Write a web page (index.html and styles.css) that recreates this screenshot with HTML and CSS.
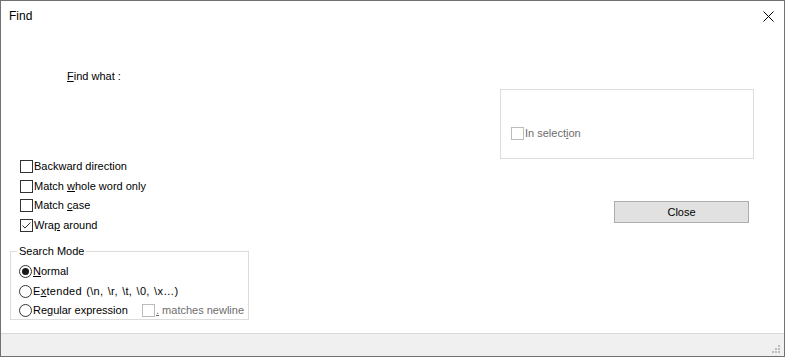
FILE: index.html
```html
<!DOCTYPE html>
<html>
<head>
<meta charset="utf-8">
<link rel="stylesheet" href="styles.css">
</head>
<body>
<div class="window">
  <div class="titlebar">
    <span class="title">Find</span>
    <svg class="close-x" width="11" height="11" viewBox="0 0 11 11"><path d="M0.5 0.5 L10.5 10.5 M10.5 0.5 L0.5 10.5" stroke="#000" stroke-width="1" fill="none"/></svg>
  </div>
  <div class="content">
    <div class="left">
      <div class="findwhat"><u>F</u>ind what :</div>
      <div class="checks">
        <div class="row"><span class="cb"></span><span class="lbl">Backward direction</span></div>
        <div class="row"><span class="cb"></span><span class="lbl">Match <u>w</u>hole word only</span></div>
        <div class="row"><span class="cb"></span><span class="lbl">Match <u>c</u>ase</span></div>
        <div class="row"><span class="cb"><svg width="11" height="11" viewBox="0 0 11 11"><path d="M1.5 5.5 L4 8 L9.5 2.5" stroke="#333" stroke-width="1" fill="none"/></svg></span><span class="lbl">Wra<u>p</u> around</span></div>
      </div>
      <fieldset class="mode">
        <legend>Search Mode</legend>
        <div class="row"><span class="rb on"></span><span class="lbl"><u>N</u>ormal</span></div>
        <div class="row"><span class="rb"></span><span class="lbl wide">E<u>x</u>tended (\n, \r, \t, \0, \x…)</span></div>
        <div class="row">
          <span class="radio-item"><span class="rb"></span><span class="lbl">Re<u>g</u>ular expression</span></span>
          <span class="cb dis"></span><span class="lbl dis-text"><u>.</u> matches newline</span>
        </div>
      </fieldset>
    </div>
    <div class="right">
      <div class="selgroup">
        <div class="row short"><span class="cb dis"></span><span class="lbl dis-text">In select<u>i</u>on</span></div>
      </div>
      <div class="btn">Close</div>
    </div>
  </div>
  <div class="status">
    <svg class="grip" width="12" height="12" viewBox="0 0 12 12">
      <rect x="8" y="2" width="2" height="2" fill="#bcbcbc"/>
      <rect x="5" y="5" width="2" height="2" fill="#bcbcbc"/>
      <rect x="8" y="5" width="2" height="2" fill="#bcbcbc"/>
      <rect x="2" y="8" width="2" height="2" fill="#bcbcbc"/>
      <rect x="5" y="8" width="2" height="2" fill="#bcbcbc"/>
      <rect x="8" y="8" width="2" height="2" fill="#bcbcbc"/>
    </svg>
  </div>
</div>
</body>
</html>
```
FILE: styles.css
```css
html, body {
  margin: 0;
  padding: 0;
  background: #ffffff;
}
body {
  font-family: "Liberation Sans", Arial, sans-serif;
  font-size: 11px;
  color: #000;
}
.window {
  width: 785px;
  height: 357px;
  box-sizing: border-box;
  border: 1px solid #717171;
  display: flex;
  flex-direction: column;
  background: #fff;
}
.titlebar {
  height: 30px;
  flex: none;
  display: flex;
  align-items: center;
  justify-content: space-between;
  padding: 0 10px 0 8px;
}
.title {
  font-size: 12px;
  line-height: 30px;
}
.close-x {
  display: block;
  margin-top: 1px;
}
.content {
  flex: 1;
  display: flex;
}
.left {
  width: 490px;
  flex: none;
  padding-left: 9px;
}
.findwhat {
  margin-top: 39px;
  margin-left: 57px;
  height: 13px;
  line-height: 13px;
}
.checks {
  margin-top: 74px;
  margin-left: 10px;
}
.row {
  height: 19.5px;
  display: flex;
  align-items: center;
}
.row.short {
  height: 13px;
}
.lbl {
  line-height: 13px;
  white-space: nowrap;
}
.lbl.wide {
  word-spacing: 1px;
  letter-spacing: 0.3px;
}
.cb {
  width: 13px;
  height: 13px;
  box-sizing: border-box;
  border: 1px solid #333;
  background: #fff;
  margin-right: 1px;
  flex: none;
  display: flex;
  align-items: center;
  justify-content: center;
}
.cb svg {
  display: block;
}
.cb.dis {
  border-color: #bcbcbc;
}
.dis-text {
  color: #6d6d6d;
}
.rb {
  width: 13px;
  height: 13px;
  box-sizing: border-box;
  border: 1px solid #333;
  border-radius: 50%;
  background: #fff;
  margin-right: 1px;
  flex: none;
  display: flex;
  align-items: center;
  justify-content: center;
}
.rb.on::after {
  content: "";
  width: 7px;
  height: 7px;
  border-radius: 50%;
  background: #1a1a1a;
}
.mode {
  margin: 10px 0 0 0;
  padding: 4px 0 0 8px;
  width: 239px;
  height: 75px;
  box-sizing: border-box;
  border: 1px solid #dcdcdc;
  min-width: 0;
}
.mode legend {
  padding: 0 2px;
  margin-left: -2px;
  line-height: 13px;
}
.radio-item {
  width: 123px;
  display: flex;
  align-items: center;
  flex: none;
}
.right {
  width: 254px;
  flex: none;
}
.selgroup {
  margin-top: 58px;
  height: 70px;
  box-sizing: border-box;
  border: 1px solid #dcdcdc;
  padding: 37px 0 0 10px;
}
.btn {
  margin-top: 42px;
  margin-left: 114px;
  width: 135px;
  height: 22px;
  box-sizing: border-box;
  border: 1px solid #adadad;
  background: #e1e1e1;
  display: flex;
  align-items: center;
  justify-content: center;
  line-height: 13px;
}
.status {
  height: 23px;
  flex: none;
  box-sizing: border-box;
  border-top: 1px solid #dadada;
  background: #f0f0f0;
  display: flex;
  justify-content: flex-end;
  align-items: flex-end;
}
.grip {
  display: block;
  margin-right: 2px;
  margin-bottom: 1px;
}
```
